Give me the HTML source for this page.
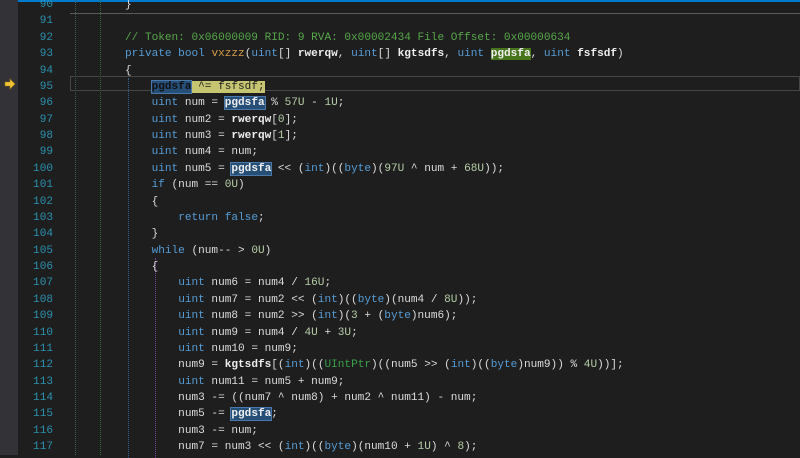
<!DOCTYPE html>
<html><head><meta charset="utf-8"><style>
body{margin:0;width:800px;height:455px;overflow:hidden;background:#1e1e1e;position:relative;font-family:"Liberation Mono",monospace;}
#top{position:absolute;left:0;top:0;width:800px;height:2px;background:#007acc;}
#gut{position:absolute;left:0;top:0;width:18px;height:455px;background:#333337;}
.ln{position:absolute;left:20px;width:33px;text-align:right;color:#2b91af;font-size:11.08px;line-height:16.38px;white-space:pre;top:-3px;}
.code{position:absolute;left:125px;top:-3px;color:#dcdcdc;font-size:11.08px;line-height:16.38px;white-space:pre;}
.k{color:#569cd6}.c{color:#57a64a}.m{color:#d69d45}.n{color:#b5cea8}.p{font-weight:bold;color:#eee}.t{color:#3aa049}
.h{background:#264f78;font-weight:bold;color:#eee;outline:1px solid #4a78a8}
.g{background:#48751c;font-weight:bold;color:#eee}
.y{background:#c6c672;color:#1e1e1e}
.guide{position:absolute;top:0;height:455px;width:0;border-left:1px dotted}
#cur{position:absolute;left:70px;top:76px;width:730px;height:15px;border:1px solid #464646;box-sizing:border-box}
#sep{position:absolute;left:70px;top:13px;width:730px;height:1px;background:#5a5a5a}
</style></head><body>
<div id="top"></div><div id="gut"></div>
<div class="guide" style="left:75px;border-color:#3c5a5a"></div>
<div class="guide" style="left:100px;border-color:#2f6b3f"></div>
<div class="guide" style="left:128px;top:78px;height:380px;border-color:#2f5f8f"></div>
<div class="guide" style="left:155px;top:258px;height:200px;border-color:#7a3f9a"></div>
<div id="sep"></div><div id="cur"></div>
<svg style="position:absolute;left:4px;top:78px" width="12" height="12" viewBox="0 0 12 12"><path d="M1 4h5V1l5 5-5 5V8H1z" fill="#f2c438" stroke="#9a7a10" stroke-width=".6"/></svg>
<div class="ln">90
91
92
93
94
95
96
97
98
99
100
101
102
103
104
105
106
107
108
109
110
111
112
113
114
115
116
117</div>
<div class="code">}

<span class="c">// Token: 0x06000009 RID: 9 RVA: 0x00002434 File Offset: 0x00000634</span>
<span class="k">private bool</span> <span class="m">vxzzz</span>(<span class="k">uint</span>[] <span class="p">rwerqw</span>, <span class="k">uint</span>[] <span class="p">kgtsdfs</span>, <span class="k">uint</span> <span class="g">pgdsfa</span>, <span class="k">uint</span> <span class="p">fsfsdf</span>)
{
    <span class="h" style="color:#111">pgdsfa</span><span class="y"> ^= fsfsdf;</span>
    <span class="k">uint</span> num = <span class="h">pgdsfa</span> % <span class="n">57U</span> - <span class="n">1U</span>;
    <span class="k">uint</span> num2 = <span class="p">rwerqw</span>[<span class="n">0</span>];
    <span class="k">uint</span> num3 = <span class="p">rwerqw</span>[<span class="n">1</span>];
    <span class="k">uint</span> num4 = num;
    <span class="k">uint</span> num5 = <span class="h">pgdsfa</span> &lt;&lt; (<span class="k">int</span>)((<span class="k">byte</span>)(<span class="n">97U</span> ^ num + <span class="n">68U</span>));
    <span class="k">if</span> (num == <span class="n">0U</span>)
    {
        <span class="k">return false</span>;
    }
    <span class="k">while</span> (num-- &gt; <span class="n">0U</span>)
    {
        <span class="k">uint</span> num6 = num4 / <span class="n">16U</span>;
        <span class="k">uint</span> num7 = num2 &lt;&lt; (<span class="k">int</span>)((<span class="k">byte</span>)(num4 / <span class="n">8U</span>));
        <span class="k">uint</span> num8 = num2 &gt;&gt; (<span class="k">int</span>)(<span class="n">3</span> + (<span class="k">byte</span>)num6);
        <span class="k">uint</span> num9 = num4 / <span class="n">4U</span> + <span class="n">3U</span>;
        <span class="k">uint</span> num10 = num9;
        num9 = <span class="p">kgtsdfs</span>[(<span class="k">int</span>)((<span class="t">UIntPtr</span>)((num5 &gt;&gt; (<span class="k">int</span>)((<span class="k">byte</span>)num9)) % <span class="n">4U</span>))];
        <span class="k">uint</span> num11 = num5 + num9;
        num3 -= ((num7 ^ num8) + num2 ^ num11) - num;
        num5 -= <span class="h">pgdsfa</span>;
        num3 -= num;
        num7 = num3 &lt;&lt; (<span class="k">int</span>)((<span class="k">byte</span>)(num10 + <span class="n">1U</span>) ^ <span class="n">8</span>);</div>
</body></html>
